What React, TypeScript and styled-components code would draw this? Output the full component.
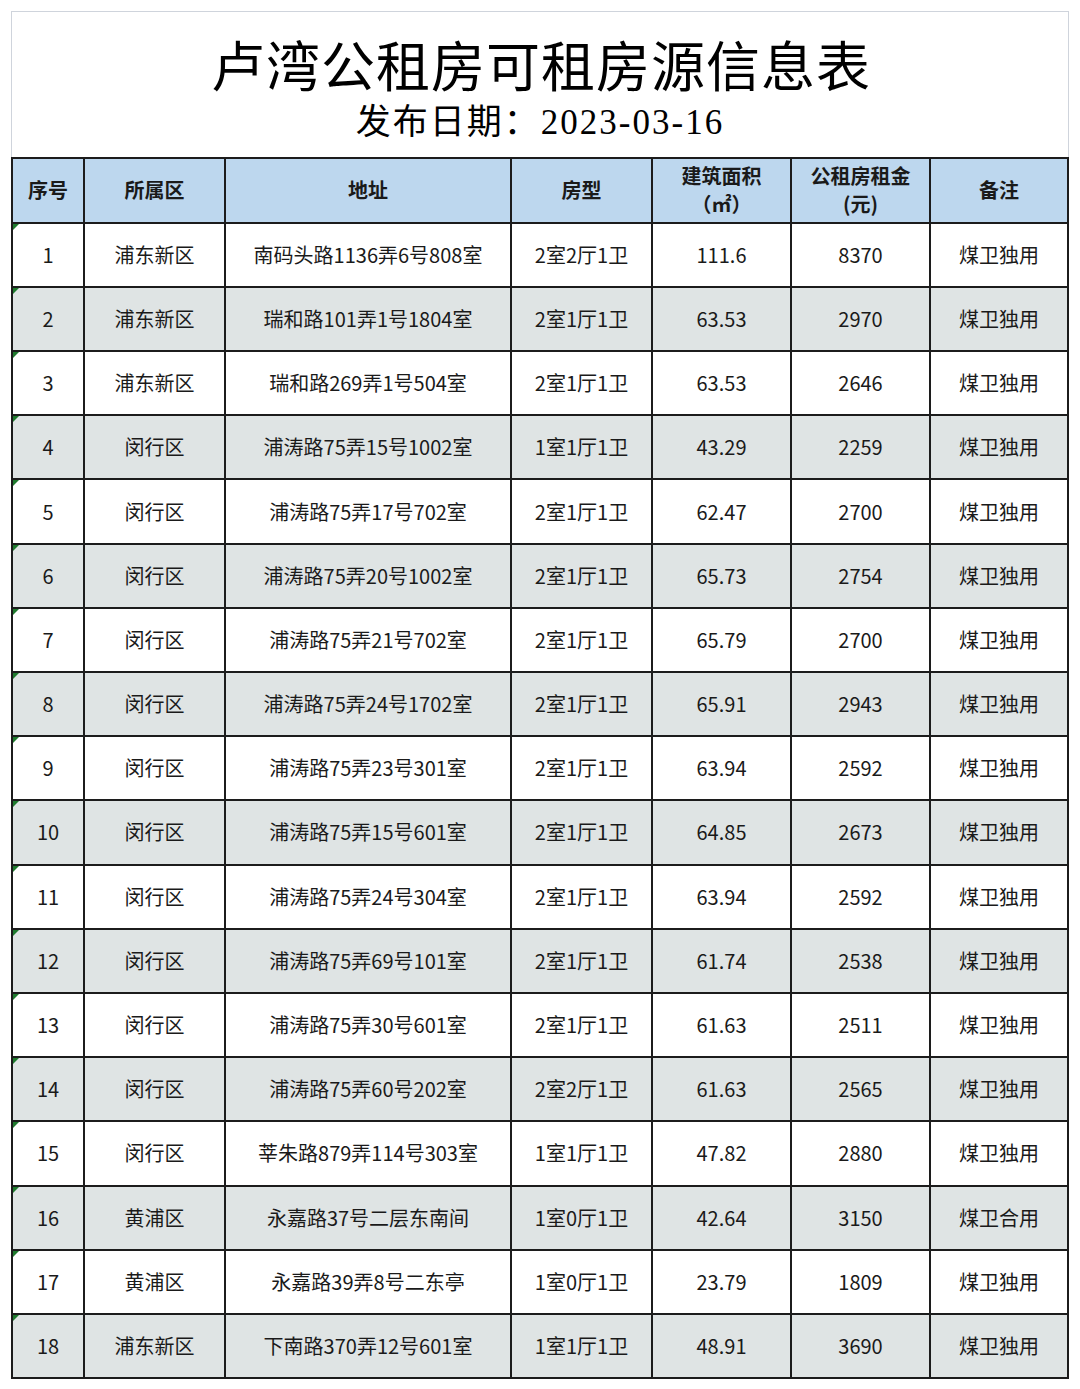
import React from "react"
import styled, { createGlobalStyle } from "styled-components"

type Row = [string, string, string, string, string, string]

const rows: Row[] = [
  ["浦东新区", "南码头路1136弄6号808室", "2室2厅1卫", "111.6", "8370", "煤卫独用"],
  ["浦东新区", "瑞和路101弄1号1804室", "2室1厅1卫", "63.53", "2970", "煤卫独用"],
  ["浦东新区", "瑞和路269弄1号504室", "2室1厅1卫", "63.53", "2646", "煤卫独用"],
  ["闵行区", "浦涛路75弄15号1002室", "1室1厅1卫", "43.29", "2259", "煤卫独用"],
  ["闵行区", "浦涛路75弄17号702室", "2室1厅1卫", "62.47", "2700", "煤卫独用"],
  ["闵行区", "浦涛路75弄20号1002室", "2室1厅1卫", "65.73", "2754", "煤卫独用"],
  ["闵行区", "浦涛路75弄21号702室", "2室1厅1卫", "65.79", "2700", "煤卫独用"],
  ["闵行区", "浦涛路75弄24号1702室", "2室1厅1卫", "65.91", "2943", "煤卫独用"],
  ["闵行区", "浦涛路75弄23号301室", "2室1厅1卫", "63.94", "2592", "煤卫独用"],
  ["闵行区", "浦涛路75弄15号601室", "2室1厅1卫", "64.85", "2673", "煤卫独用"],
  ["闵行区", "浦涛路75弄24号304室", "2室1厅1卫", "63.94", "2592", "煤卫独用"],
  ["闵行区", "浦涛路75弄69号101室", "2室1厅1卫", "61.74", "2538", "煤卫独用"],
  ["闵行区", "浦涛路75弄30号601室", "2室1厅1卫", "61.63", "2511", "煤卫独用"],
  ["闵行区", "浦涛路75弄60号202室", "2室2厅1卫", "61.63", "2565", "煤卫独用"],
  ["闵行区", "莘朱路879弄114号303室", "1室1厅1卫", "47.82", "2880", "煤卫独用"],
  ["黄浦区", "永嘉路37号二层东南间", "1室0厅1卫", "42.64", "3150", "煤卫合用"],
  ["黄浦区", "永嘉路39弄8号二东亭", "1室0厅1卫", "23.79", "1809", "煤卫独用"],
  ["浦东新区", "下南路370弄12号601室", "1室1厅1卫", "48.91", "3690", "煤卫独用"],
]

const widths = [72, 141, 286, 141, 139, 139, 138]

const GlobalStyle = createGlobalStyle`
  html, body {
    margin: 0;
    padding: 0;
    background: #ffffff;
  }
`

export default function App() {
  return (
    <>
      <GlobalStyle />
      <Page>
        <TitleBox>
          <Title>卢湾公租房可租房源信息表</Title>
          <DateLine>发布日期：2023-03-16</DateLine>
        </TitleBox>
        <Table>
          <colgroup>
            {widths.map((w, i) => (
              <col key={i} style={{ width: w }} />
            ))}
          </colgroup>
          <thead>
            <tr>
              <HeadCell>序号</HeadCell>
              <HeadCell>所属区</HeadCell>
              <HeadCell>地址</HeadCell>
              <HeadCell>房型</HeadCell>
              <HeadCell>
                建筑面积
                <br />
                （㎡）
              </HeadCell>
              <HeadCell>
                公租房租金
                <br />
                (元)
              </HeadCell>
              <HeadCell>备注</HeadCell>
            </tr>
          </thead>
          <tbody>
            {rows.map((row, i) => (
              <DataRow key={i} $shaded={i % 2 === 1}>
                <IndexCell>
                  <Marker />
                  {i + 1}
                </IndexCell>
                {row.map((v, j) => (
                  <Cell key={j}>{v}</Cell>
                ))}
              </DataRow>
            ))}
          </tbody>
        </Table>
      </Page>
    </>
  )
}

const Page = styled.div`
  width: 1058px;
  padding: 11px 0 0 11px;
  display: flex;
  flex-direction: column;
`

const TitleBox = styled.div`
  height: 145px;
  border: 1px solid #cfd4dc;
  border-bottom: none;
  display: flex;
  flex-direction: column;
  align-items: center;
  color: #000;
  font-family: "Liberation Serif", "Noto Sans CJK SC", serif;
`

const Title = styled.div`
  margin-top: 27px;
  font-size: 54px;
  line-height: 60px;
  letter-spacing: 1px;
  margin-left: 2px;
`

const DateLine = styled.div`
  margin-top: 4px;
  font-size: 35px;
  line-height: 40px;
  letter-spacing: 2px;
  margin-left: 0;
`

const Table = styled.table`
  width: 1058px;
  table-layout: fixed;
  border-collapse: collapse;
  font-family: "Noto Sans CJK SC", "Noto Sans", sans-serif;
  color: #1a1a1a;
`

const HeadCell = styled.th`
  height: 62.7px;
  padding: 0;
  background: #bdd7ee;
  border: 2px solid #1c1c1c;
  font-size: 20px;
  font-weight: 700;
  line-height: 28px;
  text-align: center;
  vertical-align: middle;
`

const DataRow = styled.tr<{ $shaded: boolean }>`
  background: ${(p) => (p.$shaded ? "#dfe4e4" : "#ffffff")};
`

const Cell = styled.td`
  height: 62.2px;
  padding: 0;
  border: 2px solid #1c1c1c;
  font-size: 20px;
  line-height: 24px;
  text-align: center;
  vertical-align: middle;
  white-space: nowrap;
`

const IndexCell = styled(Cell)`
  position: relative;
`

const Marker = styled.span`
  position: absolute;
  top: 0;
  left: 0;
  width: 0;
  height: 0;
  border-top: 6px solid #1f7a2e;
  border-right: 6px solid transparent;
`
